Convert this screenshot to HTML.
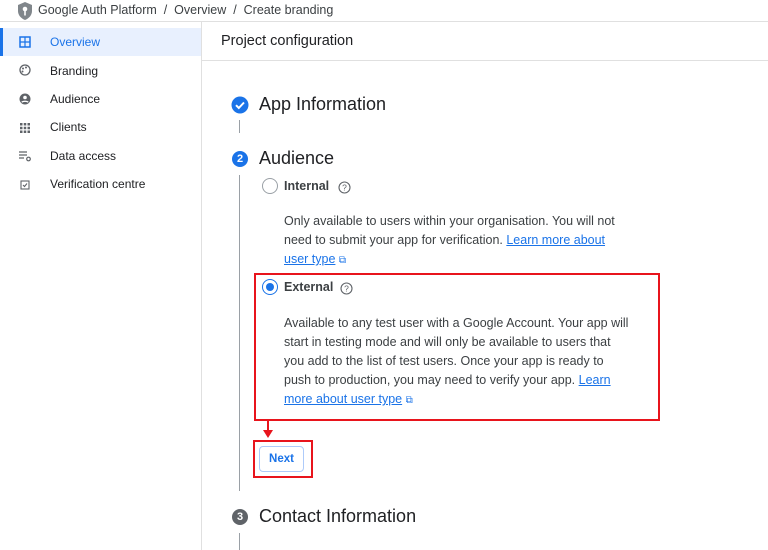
<!DOCTYPE html>
<html><head><style>
*{margin:0;padding:0;box-sizing:border-box}
body{width:768px;height:550px;overflow:hidden;background:#fff;font-family:"Liberation Sans",sans-serif;color:#202124;position:relative}
.a{position:absolute}
.t{font-size:12.5px;color:#3c4043;white-space:nowrap}
.nav{font-size:12px;color:#202124}
.ico{position:absolute;left:19px;width:12px;height:12px}
p.b{position:absolute;left:284px;font-size:12.5px;line-height:19px;color:#3c4043;width:420px;white-space:nowrap}
a{color:#1a73e8;text-decoration:underline}
.line{position:absolute;left:239px;width:1px;background:#9aa0a6}
</style></head><body>
<svg class="a" style="left:17px;top:2px" width="16" height="18" viewBox="0 0 16 18"><path d="M8 0L15 3v6c0 4-3 7.5-7 9C4 16.5 1 13 1 9V3z" fill="#80868b"/><circle cx="8" cy="7" r="2.3" fill="#fff"/><rect x="7.2" y="8.5" width="1.6" height="5" fill="#fff"/></svg>
<div class="a t" style="left:38px;top:3px;font-size:12.5px">Google Auth Platform&nbsp; / &nbsp;Overview&nbsp; / &nbsp;Create branding</div>
<div class="a" style="left:0;top:21px;width:768px;height:1px;background:#e0e0e0"></div>
<div class="a" style="left:201px;top:22px;width:1px;height:528px;background:#e0e0e0"></div>
<div class="a" style="left:0;top:28px;width:201px;height:28px;background:#e8f0fe"></div>
<div class="a" style="left:0;top:28px;width:3px;height:28px;background:#1a73e8"></div>
<svg class="ico" style="top:36px" viewBox="0 0 12 12"><rect x="1" y="1" width="10" height="10" fill="none" stroke="#1a73e8" stroke-width="1.5"/><path d="M6 1v10M1 6h10" stroke="#1a73e8" stroke-width="1.2"/></svg>
<div class="a nav" style="left:50px;top:35px;color:#1a73e8">Overview</div>
<svg class="ico" style="top:64px" viewBox="0 0 12 12"><circle cx="6" cy="6" r="5" fill="none" stroke="#5f6368" stroke-width="1.3"/><circle cx="4" cy="4.5" r="1" fill="#5f6368"/><circle cx="7" cy="3.5" r="1" fill="#5f6368"/><circle cx="3.5" cy="7.5" r="1" fill="#5f6368"/></svg>
<div class="a nav" style="left:50px;top:64px">Branding</div>
<svg class="ico" style="top:93px" viewBox="0 0 12 12"><circle cx="6" cy="6" r="5.5" fill="#5f6368"/><circle cx="6" cy="4.5" r="1.8" fill="#fff"/><path d="M2.8 9.3c1-1.4 5.4-1.4 6.4 0" stroke="#fff" stroke-width="1.3" fill="none"/></svg>
<div class="a nav" style="left:50px;top:92px">Audience</div>
<svg class="ico" style="top:122px" viewBox="0 0 12 12" fill="#5f6368"><rect x="1" y="1" width="2.5" height="2.5"/><rect x="4.75" y="1" width="2.5" height="2.5"/><rect x="8.5" y="1" width="2.5" height="2.5"/><rect x="1" y="4.75" width="2.5" height="2.5"/><rect x="4.75" y="4.75" width="2.5" height="2.5"/><rect x="8.5" y="4.75" width="2.5" height="2.5"/><rect x="1" y="8.5" width="2.5" height="2.5"/><rect x="4.75" y="8.5" width="2.5" height="2.5"/><rect x="8.5" y="8.5" width="2.5" height="2.5"/></svg>
<div class="a nav" style="left:50px;top:120px">Clients</div>
<svg class="ico" style="top:150px" viewBox="0 0 12 12"><path d="M0 2h8M0 5h8M0 8h5" stroke="#5f6368" stroke-width="1.2"/><circle cx="9.5" cy="9" r="1.8" fill="none" stroke="#5f6368" stroke-width="1.2"/></svg>
<div class="a nav" style="left:50px;top:149px">Data access</div>
<svg class="ico" style="top:179px" viewBox="0 0 12 12"><rect x="2" y="2" width="8" height="8" fill="none" stroke="#5f6368" stroke-width="1.1"/><path d="M4 6l1.5 1.5L8 4.5" stroke="#5f6368" stroke-width="1.1" fill="none"/></svg>
<div class="a nav" style="left:50px;top:177px">Verification centre</div>
<div class="a" style="left:221px;top:33px;font-size:14.5px;color:#202124">Project configuration</div>
<div class="a" style="left:202px;top:60px;width:566px;height:1px;background:#e0e0e0"></div>
<svg class="a" style="left:231px;top:96px" width="18" height="18"><circle cx="9" cy="9" r="8.5" fill="#1a73e8"/><path d="M5 9.2l2.8 2.8L13 6.5" stroke="#fff" stroke-width="2" fill="none"/></svg>
<div class="a" style="left:259px;top:94px;font-size:18px">App Information</div>
<div class="line" style="top:120px;height:13px"></div>
<div class="a" style="left:232px;top:151px;width:16px;height:16px;border-radius:50%;background:#1a73e8;color:#fff;font-size:11px;font-weight:bold;text-align:center;line-height:16px">2</div>
<div class="a" style="left:259px;top:148px;font-size:18px">Audience</div>
<div class="line" style="top:175px;height:316px"></div>
<div class="a" style="left:262px;top:178px;width:16px;height:16px;border-radius:50%;border:1.5px solid #9aa0a6"></div>
<div class="a" style="left:284px;top:179px;font-size:12.5px;font-weight:bold;color:#3c4043">Internal</div>
<svg class="a" style="left:338px;top:181px" width="13" height="13"><circle cx="6.5" cy="6.5" r="5.5" fill="none" stroke="#5f6368" stroke-width="1.1"/><text x="6.5" y="9.5" font-size="8.5" text-anchor="middle" fill="#5f6368" font-family="Liberation Sans">?</text></svg>
<p class="b" style="top:212px">Only available to users within your organisation. You will not<br>need to submit your app for verification. <a>Learn more about</a><br><a>user type</a> <span style="color:#1a73e8;font-size:10px">⧉</span></p>
<div class="a" style="left:254px;top:273px;width:406px;height:148px;border:2px solid #e8141c"></div>
<div class="a" style="left:262px;top:279px;width:16px;height:16px;border-radius:50%;border:1.5px solid #1a73e8"></div>
<div class="a" style="left:266px;top:283px;width:8px;height:8px;border-radius:50%;background:#1a73e8"></div>
<div class="a" style="left:284px;top:280px;font-size:12.5px;font-weight:bold;color:#3c4043">External</div>
<svg class="a" style="left:340px;top:282px" width="13" height="13"><circle cx="6.5" cy="6.5" r="5.5" fill="none" stroke="#5f6368" stroke-width="1.1"/><text x="6.5" y="9.5" font-size="8.5" text-anchor="middle" fill="#5f6368" font-family="Liberation Sans">?</text></svg>
<p class="b" style="top:314px">Available to any test user with a Google Account. Your app will<br>start in testing mode and will only be available to users that<br>you add to the list of test users. Once your app is ready to<br>push to production, you may need to verify your app. <a>Learn</a><br><a>more about user type</a> <span style="color:#1a73e8;font-size:10px">⧉</span></p>
<div class="a" style="left:267px;top:421px;width:2px;height:10px;background:#e8141c"></div>
<div class="a" style="left:263px;top:430px;width:0;height:0;border-left:5px solid transparent;border-right:5px solid transparent;border-top:8px solid #e8141c"></div>
<div class="a" style="left:253px;top:440px;width:60px;height:38px;border:2px solid #e8141c"></div>
<div class="a" style="left:259px;top:446px;width:45px;height:26px;border:1px solid #aecbfa;border-radius:4px;color:#1a73e8;font-size:11.5px;font-weight:bold;text-align:center;line-height:24px">Next</div>
<div class="a" style="left:232px;top:509px;width:16px;height:16px;border-radius:50%;background:#5f6368;color:#fff;font-size:11px;font-weight:bold;text-align:center;line-height:16px">3</div>
<div class="a" style="left:259px;top:506px;font-size:18px">Contact Information</div>
<div class="line" style="top:533px;height:17px"></div>
</body></html>
